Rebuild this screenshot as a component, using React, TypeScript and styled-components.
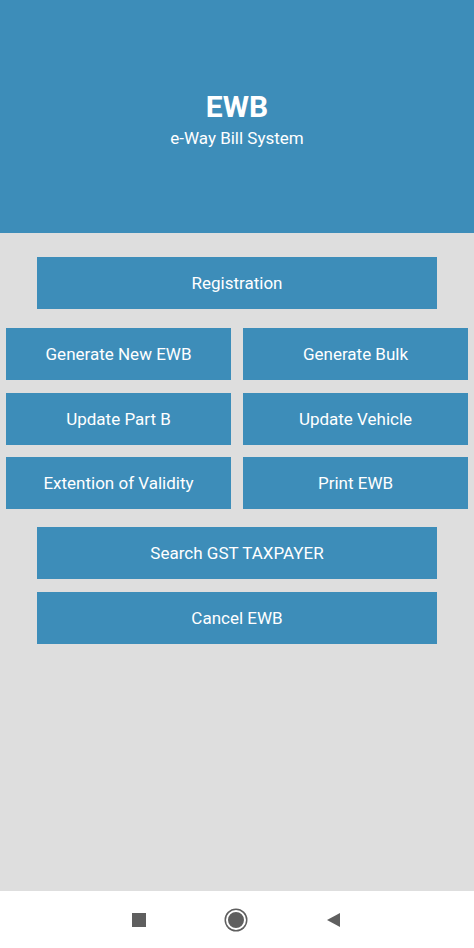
import React from "react";
import styled, { createGlobalStyle } from "styled-components";

const GlobalStyle = createGlobalStyle`
  html, body {
    margin: 0;
    padding: 0;
  }
  body {
    font-family: Roboto, "Liberation Sans", sans-serif;
    background: #dedede;
  }
`;

const wideButtons = ["Search GST TAXPAYER", "Cancel EWB"];
const pairs = [
  ["Generate New EWB", "Generate Bulk"],
  ["Update Part B", "Update Vehicle"],
  ["Extention of Validity", "Print EWB"],
];

const App = () => {
  return (
    <Screen>
      <GlobalStyle />
      <Header>
        <Title>EWB</Title>
        <Subtitle>e-Way Bill System</Subtitle>
      </Header>
      <Content>
        <WideGroup>
          <MenuButton>Registration</MenuButton>
        </WideGroup>
        <Grid>
          {pairs.flat().map((label) => (
            <MenuButton key={label}>{label}</MenuButton>
          ))}
        </Grid>
        <WideGroup>
          {wideButtons.map((label) => (
            <MenuButton key={label}>{label}</MenuButton>
          ))}
        </WideGroup>
      </Content>
      <NavBar>
        <NavSquare />
        <NavHome />
        <svg width="15" height="16" viewBox="0 0 15 16">
          <path d="M14 1 L1 8 L14 15 Z" fill="#5f5f5f" />
        </svg>
      </NavBar>
    </Screen>
  );
};

export default App;

const Screen = styled.div`
  display: flex;
  flex-direction: column;
  height: 948px;
  background: #dedede;
`;

const Header = styled.header`
  height: 233px;
  box-sizing: border-box;
  padding-top: 89px;
  background: #3d8db9;
  color: #fff;
  text-align: center;
`;

const Title = styled.h1`
  margin: 0;
  font-size: 30px;
  line-height: 36px;
  font-weight: 700;
`;

const Subtitle = styled.p`
  margin: 3px 0 0;
  font-size: 17px;
  line-height: 20px;
`;

const Content = styled.main`
  flex: 1;
  padding-top: 24px;
`;

const WideGroup = styled.div`
  display: flex;
  flex-direction: column;
  gap: 13px;
  padding: 0 37px;
  margin-bottom: 19px;
  &:last-child {
    margin-bottom: 0;
  }
`;

const Grid = styled.div`
  display: grid;
  grid-template-columns: 1fr 1fr;
  column-gap: 12px;
  row-gap: 12.5px;
  padding: 0 6px;
  margin-bottom: 18px;
`;

const MenuButton = styled.button`
  display: flex;
  align-items: center;
  justify-content: center;
  height: 52px;
  border: none;
  border-radius: 0;
  padding: 0;
  background: #3d8db9;
  color: #fff;
  font-family: Roboto, "Liberation Sans", sans-serif;
  font-size: 17px;
`;

const NavBar = styled.nav`
  height: 57px;
  background: #fff;
  display: flex;
  align-items: center;
  justify-content: center;
  gap: 80px;
  padding: 1px 2px 0 0;
  box-sizing: border-box;
`;

const NavSquare = styled.span`
  width: 14px;
  height: 14px;
  background: #5f5f5f;
`;

const NavHome = styled.span`
  width: 16px;
  height: 16px;
  border-radius: 50%;
  background: #5f5f5f;
  border: 2px solid #fff;
  box-shadow: 0 0 0 1.5px #5f5f5f;
`;
